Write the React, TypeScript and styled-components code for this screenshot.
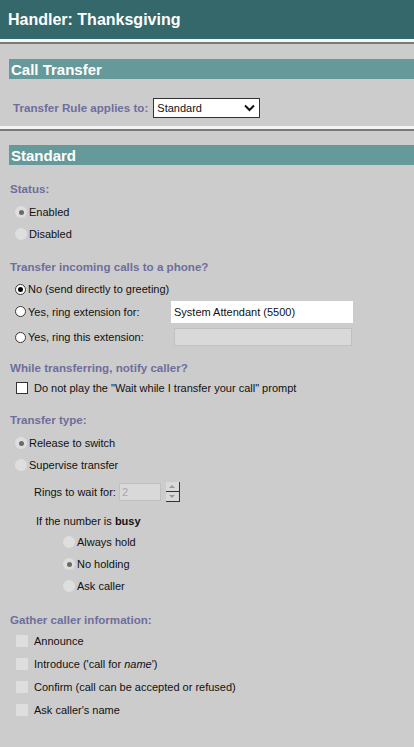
import React from "react";
import styled, { createGlobalStyle } from "styled-components";

const GlobalStyle = createGlobalStyle`
  html, body {
    margin: 0;
    padding: 0;
    background: #cccccc;
    font-family: "Liberation Sans", Arial, sans-serif;
    font-size: 11px;
    color: #111;
  }
`;

const Page = styled.div`
  width: 414px;
  min-height: 747px;
  background: #cccccc;
`;

const TitleBar = styled.div`
  height: 39px;
  background: #35686b;
  color: #fff;
  font-weight: bold;
  font-size: 16px;
  display: flex;
  align-items: center;
  padding-left: 8px;
`;

const Divider = styled.div`
  height: 2px;
  border-top: 3px solid #f4f4f4;
  background: #7a7a7a;
`;

const Section = styled.div<{ $pt: number; $pb: number }>`
  padding: ${(p) => p.$pt}px 0 ${(p) => p.$pb}px 9px;
`;

const SectionBar = styled.div`
  height: 20px;
  background: #669999;
  color: #fff;
  font-weight: bold;
  font-size: 15px;
  display: flex;
  align-items: center;
  padding-left: 2px;
`;

const RuleRow = styled.div`
  display: flex;
  align-items: center;
  margin-top: 19px;
  padding-left: 3px;
  gap: 5px;
`;

const GroupLabel = styled.div<{ $mt: number }>`
  margin-top: ${(p) => p.$mt}px;
  height: 16px;
  line-height: 16px;
  font-weight: bold;
  font-size: 11.6px;
  color: #6e6e9c;
  padding-left: 1px;
`;

const Select = styled.div`
  width: 98px;
  height: 18px;
  background: #fff;
  border: 1px solid #333;
  display: flex;
  align-items: center;
  justify-content: space-between;
  padding: 0 4px 0 3px;
  box-sizing: content-box;
`;

const Option = styled.div<{ $h?: number; $mt?: number; $indent?: number }>`
  height: ${(p) => p.$h ?? 22}px;
  margin-top: ${(p) => p.$mt ?? 0}px;
  padding-left: ${(p) => p.$indent ?? 6}px;
  display: flex;
  align-items: center;
`;

const Radio = styled.span<{ $on?: boolean; $disabled?: boolean }>`
  width: ${(p) => (p.$disabled ? 12 : 11)}px;
  height: ${(p) => (p.$disabled ? 12 : 11)}px;
  border-radius: 50%;
  box-sizing: border-box;
  flex: none;
  margin-right: 2px;
  display: flex;
  align-items: center;
  justify-content: center;
  background: ${(p) => (p.$disabled ? "#dedede" : "#fff")};
  border: ${(p) => (p.$disabled ? "none" : "1px solid #3a3a3a")};
  &::after {
    content: "";
    display: ${(p) => (p.$on ? "block" : "none")};
    width: 5px;
    height: 5px;
    border-radius: 50%;
    background: ${(p) => (p.$disabled ? "#6a6a6a" : "#000")};
  }
`;

const Check = styled.span<{ $disabled?: boolean }>`
  width: 12px;
  height: 12px;
  box-sizing: border-box;
  flex: none;
  margin: 0 6px 0 1px;
  background: ${(p) => (p.$disabled ? "#dedede" : "#fff")};
  border: ${(p) => (p.$disabled ? "none" : "1px solid #333")};
`;

const FieldLabel = styled.span`
  width: 143px;
  flex: none;
`;

const TextBox = styled.div<{ $disabled?: boolean; $w: number; $h: number }>`
  width: ${(p) => p.$w}px;
  height: ${(p) => p.$h}px;
  box-sizing: border-box;
  background: ${(p) => (p.$disabled ? "#d9d9d9" : "#fff")};
  border: 1px solid ${(p) => (p.$disabled ? "#c0c0c0" : "#fff")};
  color: ${(p) => (p.$disabled ? "#a8a8a8" : "#111")};
  display: flex;
  align-items: center;
  padding-left: 2px;
`;

const Spinner = styled.div`
  display: flex;
  flex-direction: column;
  margin-left: 5px;
`;

const SpinButton = styled.div`
  width: 14px;
  height: 10px;
  box-sizing: border-box;
  background: #dadada;
  border-right: 1px solid #333;
  border-bottom: 1px solid #333;
  display: flex;
  align-items: center;
  justify-content: center;
`;

const Arrow = styled.span<{ $up?: boolean }>`
  width: 0;
  height: 0;
  border-left: 3px solid transparent;
  border-right: 3px solid transparent;
  ${(p) => (p.$up ? "border-bottom: 3px solid #999;" : "border-top: 3px solid #999;")}
`;

export default function App() {
  return (
    <Page>
      <GlobalStyle />
      <TitleBar>Handler: Thanksgiving</TitleBar>
      <Divider />
      <Section $pt={15} $pb={8}>
        <SectionBar>Call Transfer</SectionBar>
        <RuleRow>
          <GroupLabel as="span" $mt={0}>Transfer Rule applies to:</GroupLabel>
          <Select>
            <span>Standard</span>
            <svg width="11" height="8" viewBox="0 0 11 8">
              <path d="M1 1.5 L5.5 6 L10 1.5" fill="none" stroke="#111" strokeWidth="2" />
            </svg>
          </Select>
        </RuleRow>
      </Section>
      <Divider />
      <Section $pt={14} $pb={20}>
        <SectionBar>Standard</SectionBar>

        <GroupLabel $mt={16}>Status:</GroupLabel>
        <Option $mt={4}><Radio $disabled $on />Enabled</Option>
        <Option><Radio $disabled />Disabled</Option>

        <GroupLabel $mt={14}>Transfer incoming calls to a phone?</GroupLabel>
        <Option $mt={3}><Radio $on />No (send directly to greeting)</Option>
        <Option $h={23}>
          <Radio />
          <FieldLabel>Yes, ring extension for:</FieldLabel>
          <TextBox $w={182} $h={22}>System Attendant (5500)</TextBox>
        </Option>
        <Option $mt={3}>
          <Radio />
          <FieldLabel>Yes, ring this extension:</FieldLabel>
          <TextBox $disabled $w={178} $h={18} style={{ marginLeft: 3 }} />
        </Option>

        <GroupLabel $mt={12}>While transferring, notify caller?</GroupLabel>
        <Option $h={20} $mt={2}>
          <Check />Do not play the "Wait while I transfer your call" prompt
        </Option>

        <GroupLabel $mt={14}>Transfer type:</GroupLabel>
        <Option $mt={4}><Radio $disabled $on />Release to switch</Option>
        <Option><Radio $disabled />Supervise transfer</Option>
        <Option $mt={5} $indent={25}>
          Rings to wait for:&nbsp;
          <TextBox $disabled $w={42} $h={18}>2</TextBox>
          <Spinner>
            <SpinButton><Arrow $up /></SpinButton>
            <SpinButton><Arrow /></SpinButton>
          </Spinner>
        </Option>
        <Option $h={18} $mt={9} $indent={27}>
          If the number is&nbsp;<b>busy</b>
        </Option>
        <Option $mt={1} $indent={54}><Radio $disabled />Always hold</Option>
        <Option $indent={54}><Radio $disabled $on />No holding</Option>
        <Option $indent={54}><Radio $disabled />Ask caller</Option>

        <GroupLabel $mt={15}>Gather caller information:</GroupLabel>
        <Option $h={23} $mt={1}><Check $disabled />Announce</Option>
        <Option $h={23}><Check $disabled />Introduce ('call for&nbsp;<i>name</i>')</Option>
        <Option $h={23}><Check $disabled />Confirm (call can be accepted or refused)</Option>
        <Option $h={23}><Check $disabled />Ask caller's name</Option>
      </Section>
    </Page>
  );
}
